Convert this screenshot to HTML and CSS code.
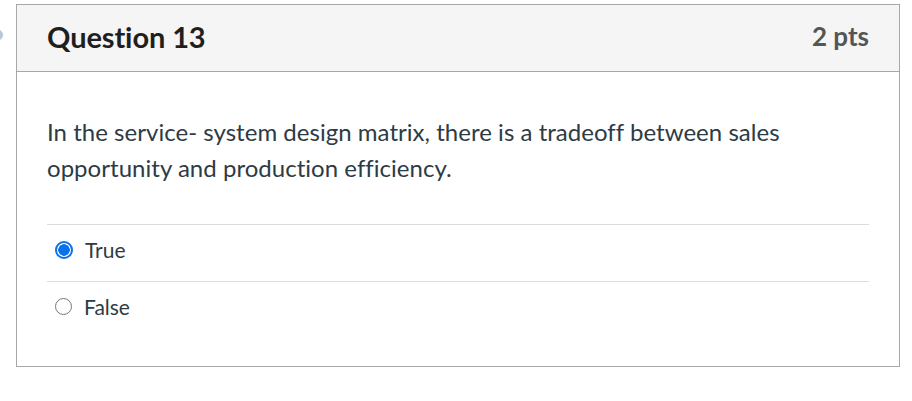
FILE: index.html
```html
<!DOCTYPE html>
<html>
<head>
<meta charset="utf-8">
<link rel="stylesheet" href="styles.css">
</head>
<body>
<span class="flag-dot"></span>
<div class="question">
  <div class="header">
    <h2 class="name">Question 13</h2>
    <span class="points">2 pts</span>
  </div>
  <div class="content">
    <p class="text">In the service- system design matrix, there is a tradeoff between sales opportunity and production efficiency.</p>
    <div class="answers">
      <label class="answer">
        <span class="radio checked"></span>
        <span class="label">True</span>
      </label>
      <label class="answer">
        <span class="radio"></span>
        <span class="label">False</span>
      </label>
    </div>
  </div>
</div>
</body>
</html>
```
FILE: styles.css
```css
html, body {
  margin: 0;
  padding: 0;
  background: #fff;
}
body {
  font-family: Lato, "Open Sans", sans-serif;
  color: #2d3b45;
  position: relative;
  width: 912px;
  height: 401px;
  overflow: hidden;
}
.flag-dot {
  position: absolute;
  left: -6px;
  top: 30px;
  width: 9px;
  height: 10px;
  border-radius: 50%;
  background: #b9c6d3;
}
.question {
  margin: 4px 0 0 16px;
  width: 884px;
  box-sizing: border-box;
  border: 1px solid #a8a8a8;
}
.header {
  height: 67px;
  box-sizing: border-box;
  background: #f5f5f5;
  border-bottom: 1px solid #a8a8a8;
  display: flex;
  align-items: center;
  justify-content: space-between;
  padding: 0 30px 4px 30px;
}
.name {
  margin: 0;
  font-size: 29px;
  font-weight: 700;
  color: #1f1f1f;
  letter-spacing: -0.1px;
}
.points {
  font-size: 26px;
  font-weight: 700;
  color: #555;
}
.content {
  padding: 42px 30px 28px 30px;
}
.text {
  margin: 0 0 38px 0;
  font-size: 24px;
  letter-spacing: 0.03px;
  line-height: 36px;
  color: #2d3b45;
}
.answers {
  display: flex;
  flex-direction: column;
}
.answer {
  display: flex;
  align-items: center;
  height: 57px;
  box-sizing: border-box;
  padding-bottom: 7px;
  border-top: 1px solid #dcdcdc;
  padding-left: 8px;
  gap: 12px;
  font-size: 21px;
  color: #2d3b45;
}
.radio {
  width: 15px;
  height: 15px;
  border-radius: 50%;
  border: 1.5px solid #767676;
  box-sizing: content-box;
  background: #fff;
  flex: none;
}
.radio.checked {
  border: 2px solid #0a72ec;
  width: 14px;
  height: 14px;
  background: radial-gradient(circle, #0a72ec 0 5.5px, #fff 6px);
}
```
